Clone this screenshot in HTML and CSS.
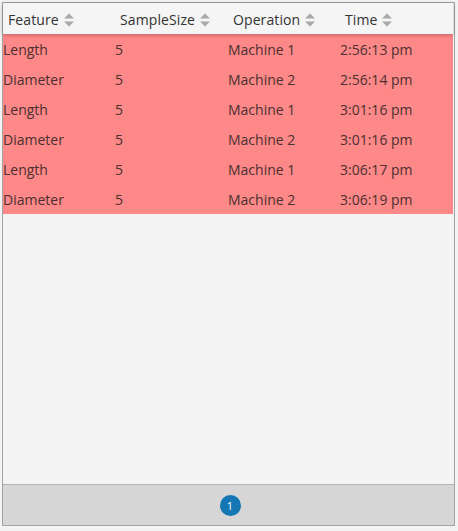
FILE: index.html
```html
<!DOCTYPE html>
<html>
<head>
<meta charset="utf-8">
<link rel="stylesheet" href="styles.css">
</head>
<body>
<div class="grid">
  <div class="head">
    <div class="hcell">Feature <span class="sort"><svg width="10" height="14" viewBox="0 0 10 14"><path d="M0 5.5L5 0.5L10 5.5Z"/><path d="M0 8.5L5 13.5L10 8.5Z"/></svg></span></div>
    <div class="hcell">SampleSize <span class="sort"><svg width="10" height="14" viewBox="0 0 10 14"><path d="M0 5.5L5 0.5L10 5.5Z"/><path d="M0 8.5L5 13.5L10 8.5Z"/></svg></span></div>
    <div class="hcell">Operation <span class="sort"><svg width="10" height="14" viewBox="0 0 10 14"><path d="M0 5.5L5 0.5L10 5.5Z"/><path d="M0 8.5L5 13.5L10 8.5Z"/></svg></span></div>
    <div class="hcell">Time <span class="sort"><svg width="10" height="14" viewBox="0 0 10 14"><path d="M0 5.5L5 0.5L10 5.5Z"/><path d="M0 8.5L5 13.5L10 8.5Z"/></svg></span></div>
  </div>
  <div class="body">
    <div class="row"><div>Length</div><div>5</div><div>Machine 1</div><div>2:56:13 pm</div></div>
    <div class="row"><div>Diameter</div><div>5</div><div>Machine 2</div><div>2:56:14 pm</div></div>
    <div class="row"><div>Length</div><div>5</div><div>Machine 1</div><div>3:01:16 pm</div></div>
    <div class="row"><div>Diameter</div><div>5</div><div>Machine 2</div><div>3:01:16 pm</div></div>
    <div class="row"><div>Length</div><div>5</div><div>Machine 1</div><div>3:06:17 pm</div></div>
    <div class="row"><div>Diameter</div><div>5</div><div>Machine 2</div><div>3:06:19 pm</div></div>
  </div>
  <div class="foot"><span class="page">1</span></div>
</div>
</body>
</html>
```
FILE: styles.css
```css
html, body {
  margin: 0;
  padding: 0;
  background: #f4f4f4;
}
body {
  font-family: "Open Sans", "Noto Sans", sans-serif;
  font-size: 14px;
  color: #333;
}
.grid {
  margin: 2px 0 0 2px;
  width: 451px;
  height: 522px;
  border: 1px solid #a3a3a3;
  display: flex;
  flex-direction: column;
  background: #f4f4f4;
}
.head {
  height: 31px;
  display: grid;
  grid-template-columns: 112px 113px 112px 113px;
  background: #f5f5f5;
  position: relative;
  z-index: 1;
  box-shadow: 0 1px 4px rgba(0,0,0,0.28);
  width: 450px;
}
.hcell {
  display: flex;
  align-items: center;
  padding-left: 5px;
  padding-top: 2px;
  color: #333;
  letter-spacing: 0.1px;
}
.sort {
  display: inline-flex;
  margin-left: 5px;
  fill: #a8a8a8;
}
.body {
  flex: 1;
  width: 450px;
}
.row {
  height: 30px;
  display: grid;
  grid-template-columns: 112px 113px 112px 113px;
  background: #ff8888;
  color: #4a3030;
  align-items: center;
}
.row > div {
  padding-top: 1px;
}
.foot {
  height: 40px;
  border-top: 1px solid #b4b4b4;
  background: #d6d6d6;
  display: flex;
  justify-content: center;
  align-items: center;
}
.page {
  width: 21px;
  height: 21px;
  border-radius: 50%;
  background: #1477b3;
  color: #fff;
  font-size: 11px;
  display: flex;
  align-items: center;
  justify-content: center;
  margin-left: 3px;
}
```
